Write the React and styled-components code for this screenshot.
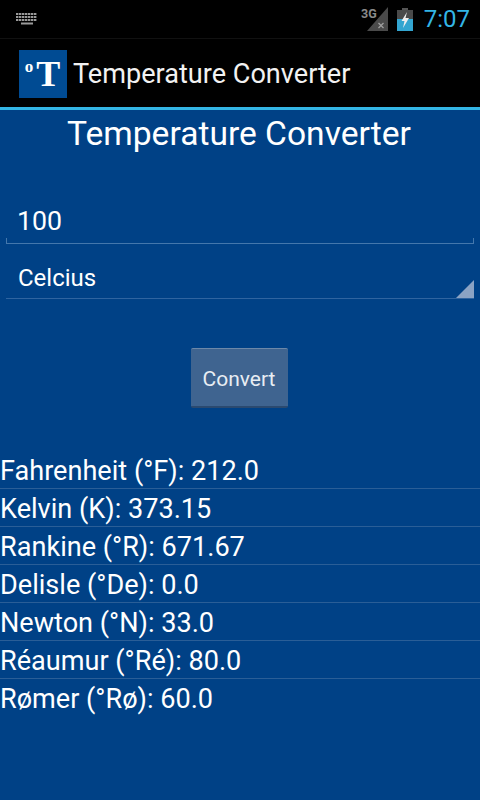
import React from 'react';
import styled, { createGlobalStyle } from 'styled-components';

const GlobalStyle = createGlobalStyle`
  html, body {
    margin: 0;
    padding: 0;
    background: #004186;
  }
  body {
    font-family: Roboto, sans-serif;
  }
`;

const Screen = styled.div`
  width: 480px;
  height: 800px;
  display: flex;
  flex-direction: column;
  overflow: hidden;
  background: #004186;
  color: #fff;
`;

const StatusBar = styled.div`
  height: 38px;
  flex: none;
  display: flex;
  align-items: center;
  padding: 0 10px 0 16px;
  background: #000;
  border-bottom: 1px solid #111;
`;

const StatusIcons = styled.div`
  margin-left: auto;
  display: flex;
  align-items: center;
`;

const Clock = styled.span`
  margin-left: 11px;
  font-size: 24px;
  color: #33b5e5;
`;

const ActionBar = styled.div`
  height: 66px;
  flex: none;
  display: flex;
  align-items: center;
  padding: 2px 0 0 19px;
  background: #000;
  border-bottom: 3px solid #33b5e5;
`;

const Logo = styled.div`
  width: 48px;
  height: 48px;
  padding-right: 1px;
  box-sizing: border-box;
  display: flex;
  align-items: center;
  justify-content: center;
  background: #004b93;
  font-family: 'Liberation Serif', serif;
  font-weight: bold;
  font-size: 36px;
  line-height: 1;
`;

const LogoDegree = styled.span`
  align-self: flex-start;
  font-size: 17px;
  margin: 8px 3px 0 0;
`;

const AppName = styled.h1`
  margin: 0 0 0 6px;
  font-size: 27.1px;
  font-weight: 400;
  color: #f2f2f2;
`;

const Main = styled.main`
  flex: 1;
  display: flex;
  flex-direction: column;
`;

const Heading = styled.h2`
  margin: 5px 0 0;
  padding-right: 2px;
  height: 38px;
  line-height: 38px;
  font-size: 33.6px;
  font-weight: 400;
  text-align: center;
`;

const NumberField = styled.div`
  margin: 44px 6px 0;
  height: 47px;
  box-sizing: border-box;
  padding: 0 12px 0 11px;
  font-size: 26.7px;
  line-height: 48px;
  background:
    linear-gradient(#4477ac, #4477ac) left bottom / 1px 6px no-repeat,
    linear-gradient(#4477ac, #4477ac) right bottom / 1px 6px no-repeat,
    linear-gradient(#4477ac, #4477ac) left bottom / 100% 1px no-repeat;
`;

const Select = styled.div`
  position: relative;
  margin: 11px 6px 0;
  height: 44px;
  box-sizing: border-box;
  padding: 0 12px;
  font-size: 24px;
  line-height: 46px;
  border-bottom: 1px solid #2f64a0;
`;

const SelectArrow = styled.span`
  position: absolute;
  right: 0;
  bottom: 0;
  width: 18px;
  height: 18px;
  background: #8ba3c4;
  clip-path: polygon(100% 0, 100% 100%, 0 100%);
`;

const ButtonRow = styled.div`
  margin-top: 49px;
  display: flex;
  justify-content: center;
  padding-right: 2px;
`;

const Button = styled.button`
  width: 97px;
  height: 60px;
  padding: 2px 0 0;
  border: 0;
  border-radius: 2px;
  background: #3f6490;
  border-top: 1px solid #6c88a9;
  border-bottom: 2px solid #2b4a70;
  color: #e8edf3;
  font-family: Roboto, sans-serif;
  font-size: 21px;
`;

const Results = styled.ul`
  margin: 43px 0 0;
  padding: 0;
  list-style: none;
`;

const Result = styled.li`
  height: 37px;
  line-height: 40px;
  font-size: 27.1px;
  white-space: nowrap;
  border-bottom: 1px solid ${({ $last }) => ($last ? 'transparent' : '#2a5e97')};
`;

const results = [
  'Fahrenheit (°F): 212.0',
  'Kelvin (K): 373.15',
  'Rankine (°R): 671.67',
  'Delisle (°De): 0.0',
  'Newton (°N): 33.0',
  'Réaumur (°Ré): 80.0',
  'Rømer (°Rø): 60.0',
];

const KeyboardIcon = () => (
  <svg width="22" height="12" viewBox="0 0 22 12" fill="#9a9a9a">
    {[0, 3, 6].map((y) =>
      [0, 3, 6, 9, 12, 15, 18].map((x) => (
        <rect key={`${x}-${y}`} x={x} y={y} width="2.4" height="2" />
      ))
    )}
    <rect x="5" y="9.5" width="12" height="2" />
  </svg>
);

const SignalIcon = () => (
  <svg width="28" height="24" viewBox="0 0 28 24">
    <polygon points="6,24 27,0 27,24" fill="#4a4a4a" />
    <text x="0" y="11" fontFamily="Roboto, sans-serif" fontSize="12.5" fontWeight="700" fill="#8a8a8a">3G</text>
    <path d="M17.5 16l5 5M22.5 16l-5 5" stroke="#a0a0a0" strokeWidth="1.3" />
  </svg>
);

const BatteryIcon = () => (
  <svg width="16" height="23" viewBox="0 0 16 23" style={{ marginLeft: 8 }}>
    <rect x="5" y="0" width="6" height="2" fill="#555" />
    <rect x="0" y="2" width="16" height="21" fill="#4a4a4a" />
    <rect x="0" y="11" width="16" height="12" fill="#33a5d0" />
    <path d="M10 4L4.5 13h3L6 20l6-10H8.5z" fill="#eee" />
  </svg>
);

export default function App() {
  return (
    <Screen>
      <GlobalStyle />
      <StatusBar>
        <KeyboardIcon />
        <StatusIcons>
          <SignalIcon />
          <BatteryIcon />
          <Clock>7:07</Clock>
        </StatusIcons>
      </StatusBar>
      <ActionBar>
        <Logo>
          <LogoDegree>o</LogoDegree>T
        </Logo>
        <AppName>Temperature Converter</AppName>
      </ActionBar>
      <Main>
        <Heading>Temperature Converter</Heading>
        <NumberField>100</NumberField>
        <Select>
          Celcius
          <SelectArrow />
        </Select>
        <ButtonRow>
          <Button>Convert</Button>
        </ButtonRow>
        <Results>
          {results.map((text, i) => (
            <Result key={text} $last={i === results.length - 1}>
              {text}
            </Result>
          ))}
        </Results>
      </Main>
    </Screen>
  );
}
